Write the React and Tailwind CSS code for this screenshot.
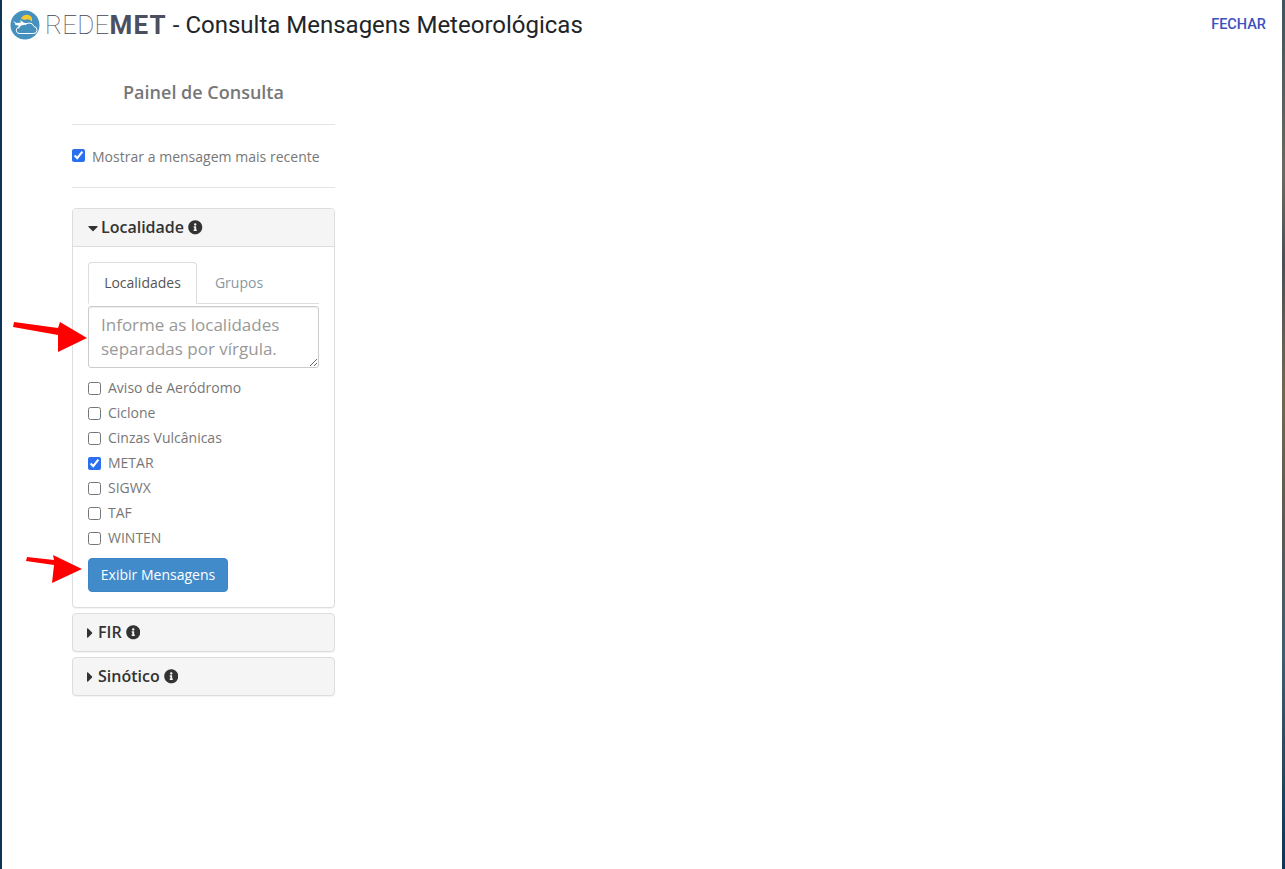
import React from "react";
import { FaInfoCircle, FaCaretDown, FaCaretRight } from "react-icons/fa";

const Arrow = ({ className, w, h, d }) => (
  <svg className={className} width={w} height={h} viewBox={`0 0 ${w} ${h}`}>
    <path d={d} fill="#fe0000" />
  </svg>
);

const Logo = () => (
  <svg width="30" height="30" viewBox="0 0 30 30" className="shrink-0">
    <circle cx="15" cy="15" r="14.5" fill="#4590bd" />
    <path d="M11 9 a6 6 0 0 1 11 -1 l0 4 a5 5 0 0 0 -7 -2 z" fill="#f2c832" />
    <path d="M9 23.5 h14 a3.5 3.5 0 0 0 1 -7 a5 5 0 0 0 -5 -3.5 a6 6 0 0 0 -4 2 M9 17 a3.3 3.3 0 0 0 0 6.5" fill="none" stroke="#fff" strokeWidth="1" />
    <path d="M3 11 L6.5 13 L11 12.5 L10 10 L14 12.7 L18 13.5 L14 15 L11 15.5 L8.5 19 L8.5 15.5 L5 15 L5.5 14 Z" fill="#fff" />
  </svg>
);

const rows = [
  ["Aviso de Aeródromo", false],
  ["Ciclone", false],
  ["Cinzas Vulcânicas", false],
  ["METAR", true],
  ["SIGWX", false],
  ["TAF", false],
  ["WINTEN", false],
];

const Info = () => <FaInfoCircle className="text-[14.5px] text-[#333] shrink-0" />;

const Closed = ({ label }) => (
  <div className="h-[39px] px-[15px] flex items-center border border-[#ddd] rounded-[4px] bg-[#f5f5f5] shadow-[0_1px_1px_rgba(0,0,0,0.05)]">
    <FaCaretRight className="text-[16px] text-[#333] ml-[-1px] mr-[5px] w-[6px] shrink-0" />
    <span className="text-[16px] font-semibold text-[#333] mr-[4px] pb-[2px]">{label}</span>
    <Info />
  </div>
);

export default function App() {
  return (
    <div className="h-[869px] w-full flex overflow-hidden bg-white font-['Open_Sans',sans-serif]">
      <div className="w-[2px] shrink-0 bg-[#0c3558]" />
      <div className="flex-1 min-w-0 flex flex-col">
        <header className="h-[50px] shrink-0 flex items-center pl-[8px] pr-[16px]">
          <Logo />
          <div className="ml-[5px] flex items-baseline font-['Roboto',sans-serif] text-[26px] leading-none">
            <span className="font-thin text-[#3f4454] tracking-[0.2px]">REDE</span>
            <span className="font-bold text-[#4b5061] tracking-[1.2px]">MET</span>
          </div>
          <h1 className="ml-[6px] font-['Roboto',sans-serif] text-[24px] font-normal text-[#212529]">- Consulta Mensagens Meteorológicas</h1>
          <a className="ml-auto font-['Roboto',sans-serif] text-[14.5px] font-medium text-[#3d50bf]">FECHAR</a>
        </header>

        <aside className="w-[263px] ml-[70px] mt-[27px]">
          <h2 className="h-[30px] flex items-center justify-center text-[18px] font-semibold text-[#777]">Painel de Consulta</h2>
          <hr className="mt-[17px] border-[#e4e4e4]" />
          <label className="h-[62px] flex items-center text-[14px] tracking-[0.02px] text-[#777]">
            <input type="checkbox" defaultChecked className="m-0 mr-[7px] mt-[-2px] accent-[#2a6ff0]" />
            Mostrar a mensagem mais recente
          </label>
          <hr className="border-[#e4e4e4]" />

          <section className="relative mt-[20px] border border-[#ddd] rounded-[4px] bg-white shadow-[0_1px_1px_rgba(0,0,0,0.05)]">
            <div className="h-[38px] px-[15px] flex items-center bg-[#f5f5f5] border-b border-[#ddd] rounded-t-[3px]">
              <FaCaretDown className="text-[16px] text-[#333] mr-[3px] w-[10px] shrink-0" />
              <span className="text-[16px] font-semibold text-[#333] mr-[4px] pb-[2px]">Localidade</span>
              <Info />
            </div>
            <div className="px-[15px] pt-[15px] pb-[15px]">
              <div className="flex h-[42px] border-b border-[#ddd]">
                <div className="w-[109px] h-[42px] pb-[2px] flex items-center justify-center text-[14px] text-[#555] bg-white border border-[#ddd] border-b-white rounded-t-[4px]">Localidades</div>
                <div className="w-[84px] flex items-center justify-center text-[14px] text-[#8a97a3]">Grupos</div>
              </div>
              <textarea
                rows={2}
                placeholder="Informe as localidades separadas por vírgula."
                className="block mt-[2px] w-full h-[62px] px-[12px] py-[6px] text-[17px] leading-[24px] text-[#555] placeholder:text-[#999] border border-[#ccc] rounded-[3px] bg-white shadow-[inset_0_1px_1px_rgba(0,0,0,0.075)] resize-y"
              />
              <div className="mt-[7px] flex flex-col">
                {rows.map(([t, c]) => (
                  <label key={t} className="h-[25px] flex items-center text-[14px] text-[#777]">
                    <input type="checkbox" defaultChecked={c} className="m-0 mr-[7px] mt-[1px] accent-[#2a6ff0]" />
                    {t}
                  </label>
                ))}
              </div>
              <button className="block mt-[8px] w-[140px] h-[34px] pb-[2px] rounded-[4px] border border-[#3d85c4] bg-[#428bca] text-[14px] text-white">Exibir Mensagens</button>
            </div>
            <Arrow className="absolute left-[-60px] top-[113px]" w={74} h={30} d="M0 5 L1 0 L45 6 L47 0 L74 16 L45 30 L45 13 Z" />
            <Arrow className="absolute left-[-47px] top-[346px]" w={56} h={28} d="M0 6 L1 2 L28 5 L27 0 L56 14 L26 28 L28 10 Z" />
          </section>

          <div className="mt-[5px] flex flex-col gap-[5px]">
            <Closed label="FIR" />
            <Closed label="Sinótico" />
          </div>
        </aside>
      </div>
      <div className="w-[3px] shrink-0 bg-[linear-gradient(180deg,#3d5560_0%,#6b6a60_20%,#4a5058_30%,#72684f_45%,#5c5a50_60%,#3b5f74_75%,#0c3558_100%)]" />
    </div>
  );
}
